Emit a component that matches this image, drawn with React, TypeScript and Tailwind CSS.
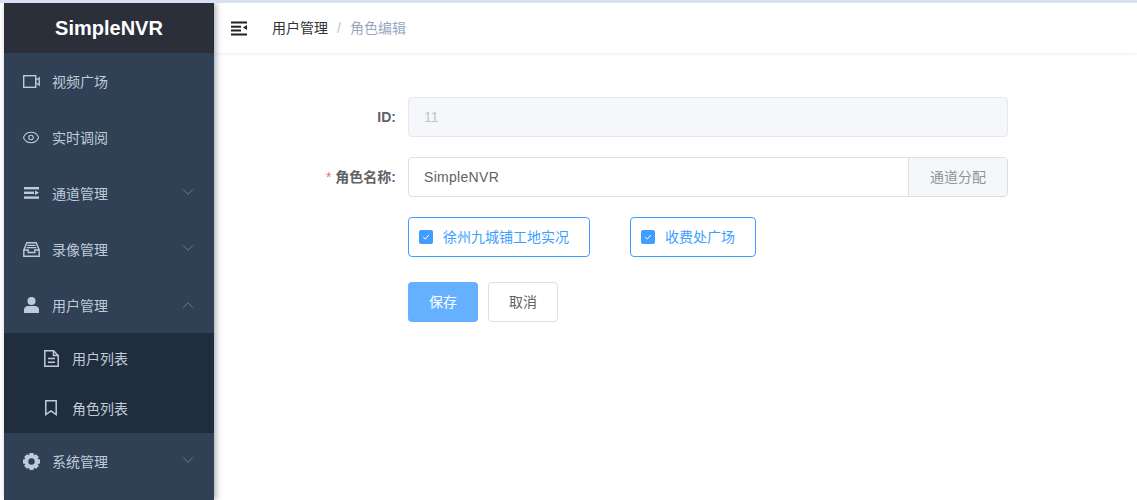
import React from 'react';
import { ChevronDown, ChevronUp, Eye } from 'lucide-react';

const zh = "font-['Liberation_Sans','Noto_Sans_CJK_SC',sans-serif]";

function VideoIcon() {
  return (
    <svg width="17" height="13" viewBox="0 0 17 13" fill="none" stroke="currentColor" strokeWidth="1.4">
      <rect x="0.7" y="0.7" width="12" height="11.6" />
      <path d="M12.8 5 L16.2 3 V10 L12.8 8" />
    </svg>
  );
}

function ListIcon() {
  return (
    <svg width="15" height="12" viewBox="0 0 15 12" fill="currentColor">
      <rect x="0" y="0" width="15" height="2.4" />
      <rect x="0" y="4.6" width="10" height="2.4" />
      <path d="M11 3.6 L15 5.8 L11 8 Z" />
      <rect x="0" y="9.4" width="15" height="2.4" />
    </svg>
  );
}

function InboxIcon() {
  return (
    <svg width="17" height="15" viewBox="0 0 17 15" fill="none" stroke="currentColor" strokeWidth="1.4">
      <path d="M0.8 8 L3.8 0.8 H13.2 L16.2 8 V14.2 H0.8 Z" />
      <path d="M0.8 8 H5.2 V10.5 H11.8 V8 H16.2" />
      <path d="M4.5 3.4 H12.5 M3.6 5.6 H13.4" />
    </svg>
  );
}

function UserIcon() {
  return (
    <svg width="15" height="16" viewBox="0 0 15 16" fill="currentColor">
      <circle cx="7.5" cy="4" r="4" />
      <path d="M0 16 V12.8 C0 10.2 2 9 4 9 H11 C13 9 15 10.2 15 12.8 V16 Z" />
    </svg>
  );
}

function DocIcon() {
  return (
    <svg width="15" height="17" viewBox="0 0 15 17" fill="none" stroke="currentColor" strokeWidth="1.5">
      <path d="M0.8 0.8 H9.5 L14.2 5.5 V16.2 H0.8 Z" />
      <path d="M9.5 0.8 V5.5 H14.2 M4 8.6 H11 M4 12.2 H11" />
    </svg>
  );
}

function BookmarkIcon() {
  return (
    <svg width="12" height="16" viewBox="0 0 12 16" fill="none" stroke="currentColor" strokeWidth="1.5">
      <path d="M0.8 0.8 H11.2 V14.6 L6 11 L0.8 14.6 Z" />
    </svg>
  );
}

function GearIcon() {
  return (
    <svg width="17" height="17" viewBox="0 0 16 16" fill="currentColor">
      <path
        fillRule="evenodd"
        d="M6.2 0 H9.8 L10.3 2.2 L12.3 1.1 L14.9 3.7 L13.8 5.7 L16 6.2 V9.8 L13.8 10.3 L14.9 12.3 L12.3 14.9 L10.3 13.8 L9.8 16 H6.2 L5.7 13.8 L3.7 14.9 L1.1 12.3 L2.2 10.3 L0 9.8 V6.2 L2.2 5.7 L1.1 3.7 L3.7 1.1 L5.7 2.2 Z M8 5 A3 3 0 1 0 8 11 A3 3 0 1 0 8 5 Z"
      />
    </svg>
  );
}

function MenuItem({ icon, label, arrow }: { icon: React.ReactNode; label: string; arrow?: 'up' | 'down' }) {
  return (
    <div className="flex h-14 items-center pl-[18px] pr-[17px] text-[#bfcbd9]">
      <span className="flex w-[18px] justify-center">{icon}</span>
      <span className="ml-3 flex-1 pt-[2px] text-[14px] leading-none">{label}</span>
      {arrow === 'down' && <ChevronDown size={18} strokeWidth={1} className="mb-[3px] text-[#7f8e9e]" />}
      {arrow === 'up' && <ChevronUp size={18} strokeWidth={1} className="mb-px text-[#7f8e9e]" />}
    </div>
  );
}

function SubItem({ icon, label }: { icon: React.ReactNode; label: string }) {
  return (
    <div className="flex h-[50px] items-center pl-[38px] text-[#bfcbd9]">
      <span className="flex w-[18px] justify-center">{icon}</span>
      <span className="ml-3 pt-[2px] text-[14px] leading-none">{label}</span>
    </div>
  );
}

function CheckTag({ label, width }: { label: string; width: string }) {
  return (
    <div className={`flex h-10 items-center rounded border border-[#409eff] pl-[10px] ${width}`}>
      <span className="flex h-[14px] w-[14px] items-center justify-center rounded-[2px] bg-[#409eff]">
        <svg width="10" height="10" viewBox="0 0 10 10" fill="none" stroke="white" strokeWidth="1">
          <path d="M2.2 5 L4.3 7.1 L7.8 3" />
        </svg>
      </span>
      <span className="ml-[10px] text-[14px] leading-none text-[#409eff]">{label}</span>
    </div>
  );
}

export default function App() {
  return (
    <div className={`${zh} h-[500px] w-[1137px] overflow-hidden border-t-[3px] border-[#d8e1f3] bg-white`}>
      <div className="flex h-[497px] pl-1">
        <aside className="w-[210px] shrink-0 bg-[#304156] shadow-[2px_0_6px_rgba(0,21,41,0.35)]">
          <div className="flex h-[50px] items-center justify-center bg-[#2b2f3a] text-[20px] font-bold text-white">
            SimpleNVR
          </div>
          <MenuItem icon={<VideoIcon />} label="视频广场" />
          <MenuItem icon={<Eye size={21} strokeWidth={1.4} />} label="实时调阅" />
          <MenuItem icon={<ListIcon />} label="通道管理" arrow="down" />
          <MenuItem icon={<InboxIcon />} label="录像管理" arrow="down" />
          <MenuItem icon={<UserIcon />} label="用户管理" arrow="up" />
          <div className="bg-[#1f2d3d]">
            <SubItem icon={<DocIcon />} label="用户列表" />
            <SubItem icon={<BookmarkIcon />} label="角色列表" />
          </div>
          <MenuItem icon={<GearIcon />} label="系统管理" arrow="down" />
        </aside>

        <main className="min-w-0 flex-1">
          <header className="flex h-[50px] items-center pl-[17px] shadow-[0_1px_4px_rgba(0,21,41,0.08)]">
            <svg width="16" height="15" viewBox="0 0 16 15" fill="#222">
              <rect x="0" y="0.5" width="16" height="2" />
              <rect x="0" y="4.7" width="10" height="2" />
              <path d="M16 4 V9 L12 6.5 Z" />
              <rect x="0" y="8.5" width="10" height="2" />
              <rect x="0" y="12.5" width="16" height="2" />
            </svg>
            <span className="ml-[25px] text-[14px] text-[#303133]">用户管理</span>
            <span className="mx-[9px] text-[14px] text-[#c0c4cc]">/</span>
            <span className="text-[14px] text-[#97a8be]">角色编辑</span>
          </header>

          <form className="pl-[194px] pt-11 text-[14px]">
            <div className="flex h-10 w-[600px] items-center">
              <label className="-ml-[100px] w-[100px] pr-3 text-right font-bold text-[#606266]">ID:</label>
              <div className="flex h-10 w-[600px] items-center rounded border border-[#e4e7ed] bg-[#f5f7fa] px-[15px] text-[#c0c4cc]">
                11
              </div>
            </div>
            <div className="mt-5 flex h-10 w-[600px] items-center">
              <label className="-ml-[100px] w-[100px] pr-3 text-right font-bold text-[#606266]">
                <span className="mr-1 font-normal text-[#f56c6c]">*</span>角色名称:
              </label>
              <div className="flex h-10 w-[600px] rounded border border-[#dcdfe6]">
                <div className="flex flex-1 items-center px-[15px] tracking-[0.3px] text-[#606266]">SimpleNVR</div>
                <div className="flex w-[99px] items-center justify-center rounded-r border-l border-[#dcdfe6] bg-[#f5f7fa] text-[#909399]">
                  通道分配
                </div>
              </div>
            </div>
            <div className="mt-5 flex gap-10">
              <CheckTag label="徐州九城铺工地实况" width="w-[182px]" />
              <CheckTag label="收费处广场" width="w-[126px]" />
            </div>
            <div className="mt-[25px] flex gap-[10px]">
              <button type="button" className="h-10 w-[70px] rounded bg-[#66b1ff] text-white">保存</button>
              <button type="button" className="h-10 w-[70px] rounded border border-[#dcdfe6] bg-white text-[#606266]">取消</button>
            </div>
          </form>
        </main>
      </div>
    </div>
  );
}
